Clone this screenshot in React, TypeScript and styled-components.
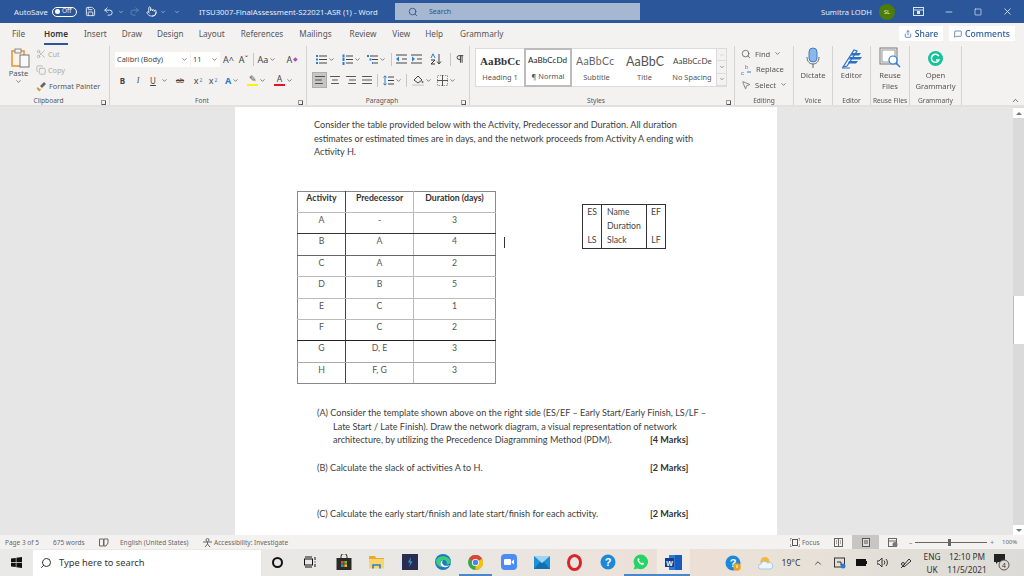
import React from "react";
import styled, { createGlobalStyle } from "styled-components";
import {
  Save, Undo2, Redo2, ChevronDown, ChevronUp, Search, Scissors, Copy, Minus, X, Square, Share, MessageSquare,
  MousePointer2, Pilcrow, AlignLeft, AlignCenter, AlignRight, AlignJustify, Pointer,
} from "lucide-react";

const UI = `"Noto Sans", "Open Sans", sans-serif`;
const DOC = `"Lato", "Noto Sans", sans-serif`;

const Global = createGlobalStyle`
  html, body { margin: 0; padding: 0; width: 1024px; height: 576px; overflow: hidden; background: #f3f2f1; }
  * { box-sizing: border-box; }
  #root { width: 1024px; height: 576px; }
`;

const Shell = styled.div`
  width: 1024px; height: 576px; display: flex; flex-direction: column; overflow: hidden;
  font-family: ${UI}; color: #444; filter: blur(0.3px);
`;

/* ---------- title bar ---------- */
const TitleBar = styled.div`
  height: 23px; flex: none; background: #2b579a; color: #e8edf5; display: flex; align-items: center;
  font-size: 7.7px; padding-left: 14px;
`;
const AutoSaveLabel = styled.span`width: 38px;`;
const Toggle = styled.span`
  width: 25px; height: 10px; border: 1px solid #fff; border-radius: 5px; display: flex; align-items: center;
  padding-left: 2px; gap: 2px; font-size: 6.5px; line-height: 1; margin-right: 4px;
  &::before { content: ""; width: 5px; height: 5px; background: #fff; border-radius: 50%; flex: none; }
`;
const QuickSlot = styled.span<{ $w: number; $dim?: boolean }>`
  width: ${(p) => p.$w}px; display: flex; justify-content: center; align-items: center; opacity: ${(p) => (p.$dim ? 0.3 : 1)};
`;
const DocTitle = styled.span`width: 196px; margin-left: 14px; white-space: nowrap; font-size: 7.7px;`;
const SearchBox = styled.div`
  width: 245px; height: 17px; background: #a5b7d1; color: #33507f; display: flex; align-items: center; gap: 11px;
  padding-left: 13px; font-size: 7px;
`;
const UserName = styled.span`margin-left: 181px; width: 58px; white-space: nowrap; font-size: 7.6px;`;
const Avatar = styled.span`
  width: 16px; height: 16px; border-radius: 50%; background: #4c7d0a; color: #e9f0da; font-size: 5.5px;
  display: flex; align-items: center; justify-content: center; flex: none;
`;
const WinCtl = styled.span<{ $w: number }>`width: ${(p) => p.$w}px; display: flex; justify-content: center;`;

/* ---------- tabs ---------- */
const TabBar = styled.div`
  height: 23px; flex: none; background: #f3f2f1; display: flex; align-items: flex-start; padding: 3px 9px 0 12px; position: relative;
`;
const Tab = styled.span<{ $active?: boolean; $gap: number }>`
  font-size: 8.2px; line-height: 15px; color: ${(p) => (p.$active ? "#333" : "#555")}; margin-right: ${(p) => p.$gap}px; white-space: nowrap;
  font-weight: ${(p) => (p.$active ? 600 : 400)}; height: 19px;
  border-bottom: ${(p) => (p.$active ? "2px solid #2b579a" : "none")};
`;
const TabActions = styled.div`margin-left: auto; display: flex; gap: 6px;`;
const ActionButton = styled.span<{ $w: number }>`
  width: ${(p) => p.$w}px; height: 15px; background: #fff; color: #2b579a; font-size: 8.6px; font-weight: 500;
  display: flex; align-items: center; justify-content: center; gap: 3px;
`;

/* ---------- ribbon ---------- */
const Ribbon = styled.div`
  height: 61px; flex: none; background: #f3f2f1; display: flex; position: relative; border-bottom: 2px solid #e2e1e0;
`;
const Group = styled.div<{ $w: number }>`
  width: ${(p) => p.$w}px; flex: none; height: 59px; position: relative; border-right: 1px solid #d4d3d2; display: flex; flex-direction: column;
`;
const GroupBody = styled.div<{ $dir?: string }>`
  flex: 1; display: flex; flex-direction: ${(p) => p.$dir || "row"}; min-height: 0;
`;
const GroupLabel = styled.div<{ $inset?: boolean }>`
  height: 8px; line-height: 8px; text-align: center; font-size: 6.6px; color: #555; flex: none; white-space: nowrap;
  padding-right: ${(p) => (p.$inset ? 12 : 0)}px;
`;
const Launcher = styled.span`
  position: absolute; right: 3px; bottom: 0; width: 5px; height: 5px; border-left: 1px solid #999; border-top: 1px solid #999;
  &::after { content: ""; position: absolute; right: 0; bottom: 0; width: 3px; height: 3px; border-right: 1px solid #555; border-bottom: 1px solid #555; }
`;
const PasteCol = styled.div`
  width: 36px; display: flex; flex-direction: column; align-items: center; padding: 2px 0 0 1px; font-size: 7.6px; color: #555; line-height: 10px;
`;
const PasteGlyph = styled.span`display: flex; margin-left: 4px;`;
const ClipCol = styled.div`display: flex; flex-direction: column;`;
const ClipRow = styled.div<{ $dim?: boolean }>`
  height: 16px; display: flex; align-items: center; gap: 2px; font-size: 7.3px; white-space: nowrap;
  color: ${(p) => (p.$dim ? "#aaa" : "#555")};
`;
const ToolRows = styled.div<{ $pad: number }>`
  display: flex; flex-direction: column; gap: 5px; padding: 5px 0 0 ${(p) => p.$pad}px;
`;
const ToolRow = styled.div`display: flex; align-items: center; height: 16px;`;
const FontField = styled.span<{ $w: number }>`
  width: ${(p) => p.$w}px; height: 15px; background: #fff; font-size: 7.4px; color: #444; display: flex; align-items: center;
  justify-content: space-between; padding: 0 2px 0 2px; margin-right: 1px; white-space: nowrap;
`;
const Tool = styled.span<{ $w: number; $on?: boolean }>`
  width: ${(p) => p.$w}px; height: 16px; display: flex; align-items: center; justify-content: center; flex: none; gap: 1px;
  font-size: 9px; color: #444; background: ${(p) => (p.$on ? "#c8c6c4" : "transparent")};
  border: ${(p) => (p.$on ? "1px solid #b0aeac" : "none")};
`;
const BoldTool = styled(Tool)`font-weight: 700; font-size: 8px;`;
const ItalicTool = styled(Tool)`font-style: italic; font-size: 8px; font-family: "Liberation Serif", serif;`;
const UnderTool = styled(Tool)`text-decoration: underline; font-size: 8px;`;
const Strike = styled.s`font-size: 7px;`;
const Divider = styled.span`width: 1px; height: 13px; background: #c8c6c4; margin: 0 2px; flex: none;`;
const Colored = styled.span<{ $c: string }>`
  width: 11px; height: 13px; display: flex; flex-direction: column; align-items: center; font-size: 8.5px; line-height: 10px; color: #444;
  &::after { content: ""; width: 11px; height: 2.5px; background: ${(p) => p.$c}; flex: none; }
`;
const Sub = styled.sub`font-size: 5px; color: #2b7cd3;`;
const Sup = styled.sup`font-size: 5px; color: #2b7cd3;`;
const BlueA = styled.span`color: #2b7cd3; font-weight: 700;`;
const Eraser = styled.span`color: #b146c2; font-size: 6px;`;

const Gallery = styled.div`
  margin: 2px 0 0 5px; width: 252px; height: 39px; background: #fff; display: flex; border: 1px solid #dcdbda; position: relative;
`;
const StyleItem = styled.div<{ $w: number; $sel?: boolean }>`
  width: ${(p) => p.$w}px; flex: none; overflow: hidden; display: flex; flex-direction: column; align-items: center;
  padding-top: ${(p) => (p.$sel ? 1 : 3)}px; border: ${(p) => (p.$sel ? "2px solid #bdbcbb" : "none")}; margin-top: ${(p) => (p.$sel ? -1 : 0)}px;
  height: ${(p) => (p.$sel ? 39 : 37)}px;
`;
const Sample = styled.div<{ $size: number; $font?: string; $bold?: boolean; $color: string; $pl: number; $ls?: number }>`
  height: 19px; line-height: 19px; white-space: nowrap; font-size: ${(p) => p.$size}px; color: ${(p) => p.$color};
  font-family: ${(p) => p.$font || DOC}; font-weight: ${(p) => (p.$bold ? 700 : 400)}; letter-spacing: ${(p) => p.$ls ?? 0.1}px;
  align-self: flex-start; padding-left: ${(p) => p.$pl}px;
`;
const Caption = styled.div`font-size: 7.4px; line-height: 12px; color: #555; white-space: nowrap;`;
const GalleryScroll = styled.div`
  margin-left: auto; width: 10px; display: flex; flex-direction: column; background: #f3f2f1; border-left: 1px solid #dcdbda;
`;
const ScrollCell = styled.span<{ $dim?: boolean }>`
  flex: 1; display: flex; align-items: center; justify-content: center; border-bottom: 1px solid #dcdbda; color: ${(p) => (p.$dim ? "#bbb" : "#444")};
`;

const EditRow = styled.div`height: 15.5px; display: flex; align-items: center; gap: 4px; font-size: 7.6px; color: #555; white-space: nowrap;`;
const EditCol = styled.div`padding: 0 0 0 6px; display: flex; flex-direction: column;`;
const BigCol = styled.div`
  flex: 1; display: flex; flex-direction: column; align-items: center; padding-top: 1px; font-size: 7.6px; color: #555; line-height: 10.5px; text-align: center;
`;
const BigIcon = styled.div`height: 22px; display: flex; align-items: center; justify-content: center; margin-bottom: 1px;`;
const Collapse = styled.span`position: absolute; right: 4px; bottom: 0; color: #444; display: flex;`;

/* ---------- document ---------- */
const Workspace = styled.div`flex: 1; min-height: 0; display: flex; background: #e6e6e6;`;
const PageArea = styled.div`flex: 1; display: flex; justify-content: center; overflow: hidden;`;
const Page = styled.div`
  width: 542px; height: 428px; background: #fff; font-family: ${DOC}; font-size: 9.1px; color: #3d3d3d; line-height: 13.6px;
  padding-top: 11px; overflow: hidden;
`;
const Intro = styled.p`margin: 0; padding-left: 79px; white-space: nowrap;`;
const TableRow = styled.div`position: relative; display: flex; align-items: flex-start; margin: 32px 0 0 62px; gap: 86px;`;
const Cursor = styled.span`position: absolute; left: 207px; top: 46px; width: 1px; height: 11px; background: #333;`;
const ActivityTable = styled.table`
  border-collapse: collapse; table-layout: fixed; width: 198px; border: 1px solid #8a8a8a; font-size: 8.7px; line-height: 11px;
`;
const HeadCell = styled.th`
  font-weight: 700; color: #333; vertical-align: top; padding: 0; height: 21.3px; border-bottom: 1px solid #bbb; white-space: nowrap;
  &:first-child { border-right: 1px solid #444; }
  &:nth-child(2) { border-right: 1px solid #bbb; }
`;
const BodyCell = styled.td<{ $line: string }>`
  text-align: center; vertical-align: top; padding: 1px 0 0; height: 21.4px; color: #555; border-bottom: 1px solid ${(p) => p.$line};
  &:first-child { border-right: 1px solid #444; }
  &:nth-child(2) { border-right: 1px solid #bbb; }
`;
const TemplateTable = styled.table`
  border-collapse: collapse; table-layout: fixed; width: 83px; margin-top: 13px; border: 1px solid #333; font-size: 8.7px; line-height: 13px; color: #444;
`;
const TemplateCell = styled.td<{ $center?: boolean }>`
  height: 14.6px; padding: 0 0 0 ${(p) => (p.$center ? 0 : 5)}px; text-align: ${(p) => (p.$center ? "center" : "left")}; white-space: nowrap; vertical-align: top;
  &:nth-child(2) { border-left: 1px solid #333; border-right: 1px solid #333; }
`;
const Questions = styled.div`padding-left: 82px;`;
const QLine = styled.div<{ $indent?: boolean; $top?: number }>`
  display: flex; white-space: nowrap; padding-left: ${(p) => (p.$indent ? 16 : 0)}px; margin-top: ${(p) => p.$top || 0}px;
`;
const QText = styled.span<{ $indent?: boolean }>`width: ${(p) => (p.$indent ? 317 : 333)}px; flex: none;`;
const Marks = styled.b`font-weight: 700; color: #333;`;

const ScrollBar = styled.div`width: 11px; margin-left: 1px; background: #dadada; display: flex; flex-direction: column; position: relative;`;
const ScrollUp = styled.span`height: 10px; background: #fff; display: flex; align-items: center; justify-content: center; margin: 1px 0 0;`;
const Triangle = styled.span<{ $down?: boolean }>`
  width: 0; height: 0; border-left: 3px solid transparent; border-right: 3px solid transparent;
  ${(p) => (p.$down ? "border-top: 3px solid #777;" : "border-bottom: 3px solid #777;")}
`;
const ScrollThumb = styled.span`margin-top: 178px; height: 48px; background: #fff; border-left: 1px solid #bbb;`;
const ScrollDown = styled.span`margin-top: auto; height: 10px; background: #fff; display: flex; align-items: center; justify-content: center;`;

/* ---------- status bar ---------- */
const StatusBar = styled.div`
  height: 14px; flex: none; background: #f3f2f1; display: flex; align-items: center; font-size: 6.5px; color: #666; padding-left: 5px; white-space: nowrap;
`;
const StatusItem = styled.span<{ $w: number }>`width: ${(p) => p.$w}px; flex: none; display: flex; align-items: center; gap: 2px; padding-top: 1px;`;
const StatusRight = styled.div`margin-left: auto; display: flex; align-items: center; height: 14px;`;
const ViewBtn = styled.span<{ $on?: boolean }>`
  width: 27px; height: 14px; background: ${(p) => (p.$on ? "#c8c6c4" : "transparent")}; display: flex; align-items: center; justify-content: center;
`;
const Zoom = styled.div`width: 85px; display: flex; align-items: center; gap: 3px; color: #777; margin-left: 3px;`;
const ZoomTrack = styled.span`flex: 1; height: 1px; background: #666; position: relative;
  &::after { content: ""; position: absolute; left: 33px; top: -3px; width: 3px; height: 7px; background: #666; }
`;
const ZoomPct = styled.span`width: 30px; padding-left: 8px; font-size: 6px;`;

/* ---------- taskbar ---------- */
const Taskbar = styled.div`
  height: 27px; flex: none; display: flex; align-items: center; color: #2a2a2a;
  background: linear-gradient(90deg, #e9e9e7 0%, #e9e7e3 45%, #ecdfd6 68%, #e9e2d8 75%, #dcdbd7 100%);
`;
const StartCell = styled.span`width: 33px; display: flex; justify-content: center;`;
const TaskSearch = styled.div`
  width: 228px; height: 26px; background: #fff; display: flex; align-items: center; gap: 7px; padding-left: 7px; font-size: 9.3px; color: #333; white-space: nowrap;
`;
const MirrorSearch = styled(Search)`transform: scaleX(-1);`;
const TaskCell = styled.span<{ $under?: boolean; $active?: boolean }>`
  width: 33px; height: 27px; flex: none; display: flex; align-items: center; justify-content: center;
  background: ${(p) => (p.$active ? "rgba(255,255,255,.35)" : "transparent")};
  border-bottom: 2px solid ${(p) => (p.$under ? "#4a86c8" : "transparent")};
  padding-top: 1px;
`;
const Cortana = styled.span`width: 11px; height: 11px; border: 2px solid #111; border-radius: 50%;`;
const Tray = styled.div`margin-left: auto; display: flex; align-items: center; height: 27px; padding-right: 13px;`;
const TrayCell = styled.span<{ $w: number }>`width: ${(p) => p.$w}px; flex: none; display: flex; justify-content: center; align-items: center; font-size: 8.6px; color: #333; white-space: nowrap;`;
const TrayStack = styled.span<{ $w: number }>`
  width: ${(p) => p.$w}px; flex: none; display: flex; flex-direction: column; align-items: center; font-size: 8.3px; line-height: 13px; color: #333; white-space: nowrap;
`;

/* ---------- drawn icons ---------- */
const Lines = ({ ys, x1 = 1, x2 = 11, c = "#444" }: { ys: number[]; x1?: number; x2?: number; c?: string }) => (
  <>{ys.map((y) => <line key={y} x1={x1} x2={x2} y1={y} y2={y} stroke={c} strokeWidth="1" />)}</>
);
const Down = ({ s = 7 }: { s?: number }) => <ChevronDown size={s} color="#555" strokeWidth={2.4} />;
const Bullets = () => (
  <svg width="11" height="11"><Lines ys={[2, 5.5, 9]} x1={3} /><rect x="0" y="1" width="2" height="2" fill="#2b7cd3" /><rect x="0" y="4.5" width="2" height="2" fill="#2b7cd3" /><rect x="0" y="8" width="2" height="2" fill="#2b7cd3" /></svg>
);
const Numbers = () => (
  <svg width="11" height="11"><Lines ys={[2, 5.5, 9]} x1={4} /><rect x="0.5" y="0.5" width="2" height="3" fill="#2b7cd3" /><rect x="0.5" y="4" width="2" height="3" fill="#2b7cd3" /><rect x="0.5" y="8" width="2" height="3" fill="#2b7cd3" /></svg>
);
const Multi = () => (
  <svg width="11" height="11"><line x1="3" x2="11" y1="2" y2="2" stroke="#444" /><line x1="5" x2="11" y1="5.5" y2="5.5" stroke="#444" /><line x1="7" x2="11" y1="9" y2="9" stroke="#444" /><rect x="0" y="1" width="2" height="2" fill="#2b7cd3" /><rect x="2.5" y="4.5" width="2" height="2" fill="#2b7cd3" /><rect x="5" y="8" width="1.5" height="2" fill="#2b7cd3" /></svg>
);
const Indent = ({ flip }: { flip?: boolean }) => (
  <svg width="11" height="10"><Lines ys={[1, 9]} x1={0} /><line x1="6" x2="11" y1="5" y2="5" stroke="#444" /><path d={flip ? "M0 5l3-2.5v5z" : "M4 5l-3-2.5v5z"} fill="#2b7cd3" /></svg>
);
const Sort = () => (
  <svg width="12" height="12"><path d="M1 5 L3 0.8 L5 5" fill="none" stroke="#2b7cd3" /><path d="M1 7h4l-4 4h4" fill="none" stroke="#333" /><path d="M9 1v10M7 8.5L9 11l2-2.5" fill="none" stroke="#444" /></svg>
);
const LineSpacing = () => (
  <svg width="11" height="11"><path d="M2 1v9M0.5 2.5L2 .8l1.5 1.7M.5 8.5L2 10.2l1.5-1.7" fill="none" stroke="#2b7cd3" /><Lines ys={[2, 5.5, 9]} x1={5} /></svg>
);
const Fill = () => (
  <svg width="12" height="12"><path d="M2 6L6 2l4 4-4 3z" fill="none" stroke="#444" /><rect x="0" y="10.5" width="12" height="1.2" fill="#ccc" /><circle cx="10.5" cy="8" r="1" fill="#666" /></svg>
);
const Borders = () => (
  <svg width="11" height="11"><rect x=".5" y=".5" width="10" height="10" fill="none" stroke="#999" strokeDasharray="1.5 1" /><path d="M0 5.5h11M5.5 0v11" stroke="#555" /></svg>
);
const PasteIcon = () => (
  <svg width="19" height="20" viewBox="0 0 19 20">
    <rect x="1" y="3" width="12" height="15" fill="#fdf3e6" stroke="#e8912d" strokeWidth="1.5" />
    <rect x="4" y="1" width="6" height="4" fill="#f3f2f1" stroke="#888" />
    <rect x="9" y="7" width="9" height="12" fill="#f9f9f9" stroke="#777" />
  </svg>
);
const Painter = () => (
  <svg width="11" height="11" viewBox="0 0 11 11"><path d="M1 6L5 8.5 3.5 10.5 0.8 8z" fill="#e8912d" /><path d="M4 5L8 1l2 2-4 4z" fill="#666" /></svg>
);
const FindRep = () => (
  <svg width="11" height="11"><text x="4" y="5" fontSize="6" fill="#b146c2" fontFamily="Liberation Sans">b</text><text x="0" y="10.5" fontSize="6" fill="#2b7cd3" fontFamily="Liberation Sans">c</text><path d="M6 8h4" stroke="#2b7cd3" /></svg>
);
const MicIcon = () => (
  <svg width="14" height="22" viewBox="0 0 14 22"><rect x="3" y="1" width="8" height="14" rx="4" fill="#8ab8e8" stroke="#3d7cc9" /><path d="M1 10c0 5 3 7 6 7s6-2 6-7M7 17v4" fill="none" stroke="#666" /></svg>
);
const EditorIcon = () => (
  <svg width="22" height="22" viewBox="0 0 22 22"><path d="M2 20L13 3l3 1L6 19z" fill="none" stroke="#2b6fc7" strokeWidth="1.2" /><path d="M9 10h12l-2 2.5H8zM8 14h9l-2 2.5H7zM11 6h9l-2 2.5h-8z" fill="#2b6fc7" /><path d="M1 21h8" stroke="#2b6fc7" /></svg>
);
const ReuseIcon = () => (
  <svg width="22" height="22" viewBox="0 0 22 22"><rect x="1" y="1" width="17" height="16" fill="#f3f2f1" stroke="#777" /><rect x="3" y="3" width="13" height="12" fill="#fff" stroke="#999" /><circle cx="14" cy="13" r="4" fill="#fff" stroke="#2b7cd3" strokeWidth="1.2" /><path d="M17 16l4 4" stroke="#2b7cd3" strokeWidth="1.4" /></svg>
);
const GrammarlyIcon = () => (
  <svg width="15" height="15" viewBox="0 0 15 15"><circle cx="7.5" cy="7.5" r="7.5" fill="#15c39a" /><path d="M10.8 5.2A4 4 0 1 0 11 9H8" fill="none" stroke="#fff" strokeWidth="1.5" /></svg>
);
const PresentIcon = () => (
  <svg width="11" height="9"><rect x=".5" y=".5" width="10" height="8" fill="none" stroke="#dfe6f1" /><path d="M.5 3h10" stroke="#dfe6f1" /><rect x="4" y="4" width="3" height="3" fill="#dfe6f1" /></svg>
);
const WinLogo = () => (
  <svg width="11" height="11"><path d="M0 1.6L4.8.9v4.2H0zM5.4.8L11 0v5.1H5.4zM0 5.8h4.8V10L0 9.4zM5.4 5.8H11V11l-5.6-.8z" fill="#111" /></svg>
);
const TaskView = () => (
  <svg width="13" height="12"><rect x=".5" y="3" width="8" height="6" fill="none" stroke="#111" /><path d="M1 1h7M1 11h7M11 1v3M11 5.5v1M11 8v3" stroke="#111" /></svg>
);
const Store = () => (
  <svg width="16" height="16"><path d="M5 4V2.5a3 3 0 0 1 6 0V4" fill="none" stroke="#222" /><rect x="0.5" y="4" width="15" height="12" fill="#2a2a2a" /><rect x="5" y="7" width="2.7" height="2.7" fill="#e8492b" /><rect x="8.3" y="7" width="2.7" height="2.7" fill="#7cb82f" /><rect x="5" y="10.3" width="2.7" height="2.7" fill="#2b8fe0" /><rect x="8.3" y="10.3" width="2.7" height="2.7" fill="#f5b800" /></svg>
);
const Folder = () => (
  <svg width="15" height="14"><path d="M0 1h6l1 2h8v2H0z" fill="#e9a92c" /><rect y="4" width="15" height="9.5" fill="#fbd56b" /><path d="M4 13.5V10h7v3.5" fill="none" stroke="#2b7cd3" strokeWidth="1.6" /></svg>
);
const DarkApp = () => (
  <svg width="16" height="16"><rect width="16" height="16" fill="#2a2d52" /><path d="M9 3L6 8.5h2.4L7 13l3.5-5.5H8.2z" fill="#29a9e0" /></svg>
);
const Edge = () => (
  <svg width="16" height="16" viewBox="0 0 16 16"><circle cx="8" cy="8" r="8" fill="#1b79c4" /><path d="M1 6.5C3 1 13 0.5 15.7 7c.6 3-2 3.6-4.4 3.2C13 7 9 4.5 6.3 7 5 8.2 5 11 7 13c-3 .2-6-2.5-6-6.5z" fill="#3ecb7a" /><path d="M5.5 9.5c0 3 3 4.5 6 3.6 1.2-.4 2.4-1.2 3-2.2-2 1.2-4 1-5.2.5C7.5 10.7 6.2 8.7 8 6.6 6 7 5.5 8.4 5.5 9.5z" fill="#fff" /></svg>
);
const Chrome = () => (
  <svg width="15" height="15" viewBox="0 0 16 16"><circle cx="8" cy="8" r="8" fill="#3fa34d" /><path d="M8 8L1.1 4A8 8 0 0 1 15 4z" fill="#db4437" /><path d="M8 8l7-4a8 8 0 0 1-7 12z" fill="#f4c20d" /><circle cx="8" cy="8" r="3.8" fill="#fff" /><circle cx="8" cy="8" r="2.9" fill="#4285f4" /></svg>
);
const ZoomApp = () => (
  <svg width="16" height="16"><rect width="16" height="16" rx="4" fill="#4a8cf7" /><rect x="3" y="5" width="7" height="6" rx="1" fill="#fff" /><path d="M10.5 7.5l2.5-2v5l-2.5-2z" fill="#fff" /></svg>
);
const Mail = () => (
  <svg width="16" height="13"><rect width="16" height="13" fill="#1f8fd6" /><path d="M0 0h16L8 7z" fill="#9fd5f3" /><path d="M0 13l6-7 2 1.6 2-1.6 6 7z" fill="#0f6fb0" /></svg>
);
const Opera = () => (
  <svg width="15" height="17"><ellipse cx="7.5" cy="8.5" rx="6" ry="7" fill="none" stroke="#d8232a" strokeWidth="3" /></svg>
);
const HelpBall = ({ warn }: { warn?: boolean }) => (
  <svg width="16" height="16" viewBox="0 0 16 16"><circle cx="8" cy="8" r="7.5" fill="#1e88d8" /><text x="8" y="12" textAnchor="middle" fontSize="11" fontWeight="700" fill="#fff" fontFamily="Liberation Sans">?</text>{warn && <><circle cx="12" cy="12" r="3.8" fill="#f0a21e" /><rect x="11.5" y="10" width="1" height="3" fill="#fff" /></>}</svg>
);
const WhatsApp = () => (
  <svg width="16" height="16" viewBox="0 0 16 16"><path d="M8 .5a7.3 7.3 0 0 0-6.2 11.2L.8 15.4l3.8-1A7.3 7.3 0 1 0 8 .5z" fill="#25d366" /><path d="M5 4.5c-1 1.2-.5 3 1 4.6s3.4 2.3 4.7 1.3l.4-1-1.8-1-.8.7c-1-.4-2-1.4-2.5-2.6l.7-.7-.9-1.9z" fill="#fff" /></svg>
);
const WordApp = () => (
  <svg width="17" height="15"><rect x="4" width="13" height="15" fill="#2b7cd3" /><rect x="10" width="7" height="15" fill="#185abd" /><rect y="3" width="9" height="9" fill="#103f91" /><text x="4.5" y="10.5" textAnchor="middle" fontSize="7" fontWeight="700" fill="#fff" fontFamily="Liberation Sans">W</text></svg>
);
const Cloud = () => (
  <svg width="16" height="14"><circle cx="7" cy="5.5" r="4.5" fill="#f6b73c" /><path d="M3 13a2.5 2.5 0 0 1 0-5 3.5 3.5 0 0 1 6.5-1 3 3 0 0 1 3.5 6z" fill="#eef5fb" stroke="#8fc0e6" strokeWidth="0.8" /></svg>
);
const Monitor = () => (
  <svg width="12" height="12"><rect x=".5" y="1" width="10" height="9" fill="none" stroke="#333" /><circle cx="9" cy="9" r="2.5" fill="#2b7cd3" /><path d="M3 5h4v3" fill="none" stroke="#333" /></svg>
);
const Battery = () => <svg width="11" height="7"><rect width="10" height="7" fill="#111" /><rect x="10" y="2" width="1" height="3" fill="#111" /></svg>;
const Speaker = () => <svg width="11" height="9"><path d="M0 3h2l3-3v9L2 6H0z" fill="none" stroke="#333" /><path d="M7 2.5a3 3 0 0 1 0 4M9 1a5 5 0 0 1 0 7" fill="none" stroke="#333" /></svg>;
const Pen = () => <svg width="12" height="12"><path d="M1 11L4 8M3 9l6-7 2 2-7 6z" fill="none" stroke="#333" /><circle cx="3" cy="7" r="1.5" fill="none" stroke="#333" /></svg>;
const Notify = () => (
  <svg width="17" height="17"><path d="M0 0h11v8H4l-2 2V8H0z" fill="#222" /><circle cx="10" cy="11" r="5" fill="#dcdbd7" stroke="#555" /><text x="10" y="13.5" fontSize="7" textAnchor="middle" fill="#333" fontFamily="Liberation Sans">4</text></svg>
);
const BookIcon = () => <svg width="10" height="9"><path d="M.5 1h4v7h-4zM5 1h4v4L7 8H5z" fill="none" stroke="#666" /></svg>;
const PersonIcon = () => <svg width="9" height="9"><circle cx="4.5" cy="2" r="1.5" fill="none" stroke="#666" /><path d="M0 4h9M4.5 4v2L2 9M4.5 6L7 9" stroke="#666" fill="none" /></svg>;
const FocusIcon = () => <svg width="10" height="9"><rect x="2.5" y="1.5" width="5" height="6" fill="none" stroke="#555" /><path d="M0 3V0h2M8 0h2v3M0 6v3h2M8 9h2V6" fill="none" stroke="#777" /></svg>;
const ReadIcon = () => <svg width="9" height="9"><rect x=".5" y=".5" width="8" height="8" fill="none" stroke="#666" /><path d="M4.5 0v9M2 3h1M2 5h1M6 3h1M6 5h1" stroke="#666" /></svg>;
const PrintIcon = () => <svg width="8" height="9"><rect x=".5" y=".5" width="7" height="8" fill="#ddd" stroke="#555" /><path d="M2 3h4M2 5h4" stroke="#555" /></svg>;
const WebIcon = () => <svg width="10" height="9"><rect x=".5" y=".5" width="8" height="8" fill="none" stroke="#666" /><circle cx="7" cy="6.5" r="2.5" fill="#777" /><path d="M1 3h7" stroke="#666" /></svg>;

const tabs: [string, number][] = [
  ["File", 19], ["Home", 16], ["Insert", 15], ["Draw", 15], ["Design", 15], ["Layout", 16], ["References", 16],
  ["Mailings", 18], ["Review", 16], ["View", 15], ["Help", 17], ["Grammarly", 0],
];
const rows = [
  ["A", "-", "3", "#333"], ["B", "A", "4", "#666"], ["C", "A", "2", "#bbb"], ["D", "B", "5", "#bbb"],
  ["E", "C", "1", "#bbb"], ["F", "C", "2", "#222"], ["G", "D, E", "3", "#aaa"], ["H", "F, G", "3", "#8a8a8a"],
];
const taskIcons = [
  { el: <Cortana /> },
  { el: <TaskView /> }, { el: <Store /> }, { el: <Folder /> }, { el: <DarkApp /> }, { el: <Edge /> },
  { el: <Chrome />, under: true }, { el: <ZoomApp /> }, { el: <Mail /> }, { el: <Opera /> }, { el: <HelpBall /> },
  { el: <WhatsApp />, under: true }, { el: <WordApp />, under: true, active: true },
];

export default function App() {
  return (
    <Shell>
      <Global />
      <TitleBar>
        <AutoSaveLabel>AutoSave</AutoSaveLabel>
        <Toggle>Off</Toggle>
        <QuickSlot $w={19}><Save size={11} strokeWidth={2} /></QuickSlot>
        <QuickSlot $w={17}><Undo2 size={11} strokeWidth={2} /></QuickSlot>
        <QuickSlot $w={8}><ChevronDown size={6} /></QuickSlot>
        <QuickSlot $w={19} $dim><Redo2 size={11} strokeWidth={2} /></QuickSlot>
        <QuickSlot $w={14}><Pointer size={11} strokeWidth={2} /></QuickSlot>
        <QuickSlot $w={10}><ChevronDown size={6} /></QuickSlot>
        <QuickSlot $w={17}><ChevronDown size={6} /></QuickSlot>
        <DocTitle>ITSU3007-FinalAssessment-S22021-ASR (1)  -  Word</DocTitle>
        <SearchBox><Search size={10} strokeWidth={2} />Search</SearchBox>
        <UserName>Sumitra LODH</UserName>
        <Avatar>SL</Avatar>
        <WinCtl $w={46}><PresentIcon /></WinCtl>
        <WinCtl $w={15}><Minus size={10} strokeWidth={1.8} /></WinCtl>
        <WinCtl $w={44}><Square size={8} strokeWidth={2} /></WinCtl>
        <WinCtl $w={15}><X size={11} strokeWidth={1.8} /></WinCtl>
      </TitleBar>

      <TabBar>
        {tabs.map(([t, g]) => <Tab key={t} $gap={g} $active={t === "Home"}>{t}</Tab>)}
        <TabActions>
          <ActionButton $w={44}><Share size={8} />Share</ActionButton>
          <ActionButton $w={66}><MessageSquare size={8} />Comments</ActionButton>
        </TabActions>
      </TabBar>

      <Ribbon>
        <Group $w={110}>
          <GroupBody>
            <PasteCol><PasteGlyph><PasteIcon /></PasteGlyph>Paste<Down /></PasteCol>
            <ClipCol>
              <ClipRow $dim><Scissors size={10} strokeWidth={1.8} />Cut</ClipRow>
              <ClipRow $dim><Copy size={10} strokeWidth={1.8} />Copy</ClipRow>
              <ClipRow><Painter />Format Painter</ClipRow>
            </ClipCol>
          </GroupBody>
          <GroupLabel $inset>Clipboard</GroupLabel>
          <Launcher />
        </Group>

        <Group $w={197}>
          <GroupBody>
            <ToolRows $pad={5}>
              <ToolRow>
                <FontField $w={75}>Calibri (Body)<Down /></FontField>
                <FontField $w={29}>11<Down /></FontField>
                <Tool $w={15}>A^</Tool>
                <Tool $w={15}>Aˇ</Tool>
                <Divider />
                <Tool $w={22}>Aa<Down /></Tool>
                <Tool $w={29}>A<Eraser>◆</Eraser></Tool>
              </ToolRow>
              <ToolRow>
                <BoldTool $w={15}>B</BoldTool>
                <ItalicTool $w={16}>I</ItalicTool>
                <UnderTool $w={14}>U</UnderTool>
                <Tool $w={9}><Down /></Tool>
                <Tool $w={22}><Strike>ab</Strike></Tool>
                <Tool $w={14}>x<Sub>2</Sub></Tool>
                <Tool $w={16}>x<Sup>2</Sup></Tool>
                <Tool $w={22}><BlueA>A</BlueA><Down /></Tool>
                <Tool $w={27}><Colored $c="#fff200">✎</Colored><Down /></Tool>
                <Tool $w={27}><Colored $c="#e81123">A</Colored><Down /></Tool>
              </ToolRow>
            </ToolRows>
          </GroupBody>
          <GroupLabel $inset>Font</GroupLabel>
          <Launcher />
        </Group>

        <Group $w={163}>
          <GroupBody>
            <ToolRows $pad={5}>
              <ToolRow>
                <Tool $w={26}><Bullets /><Down /></Tool>
                <Tool $w={26}><Numbers /><Down /></Tool>
                <Tool $w={25}><Multi /><Down /></Tool>
                <Divider />
                <Tool $w={15}><Indent flip /></Tool>
                <Tool $w={15}><Indent /></Tool>
                <Tool $w={24}><Sort /></Tool>
                <Divider />
                <Tool $w={14}><Pilcrow size={10} strokeWidth={2.4} /></Tool>
              </ToolRow>
              <ToolRow>
                <Tool $w={15} $on><AlignLeft size={12} strokeWidth={1.8} /></Tool>
                <Tool $w={16}><AlignCenter size={12} strokeWidth={1.8} /></Tool>
                <Tool $w={16}><AlignRight size={12} strokeWidth={1.8} /></Tool>
                <Tool $w={16}><AlignJustify size={12} strokeWidth={1.8} /></Tool>
                <Divider />
                <Tool $w={24}><LineSpacing /><Down /></Tool>
                <Divider />
                <Tool $w={25}><Fill /><Down /></Tool>
                <Tool $w={25}><Borders /><Down /></Tool>
              </ToolRow>
            </ToolRows>
          </GroupBody>
          <GroupLabel $inset>Paragraph</GroupLabel>
          <Launcher />
        </Group>

        <Group $w={265}>
          <GroupBody>
            <Gallery>
              <StyleItem $w={48}><Sample $pl={4} $size={11} $bold $font={`"Liberation Serif", serif`} $color="#333">AaBbCc</Sample><Caption>Heading 1</Caption></StyleItem>
              <StyleItem $w={48} $sel><Sample $pl={2} $size={8} $color="#222">AaBbCcDd</Sample><Caption>¶ Normal</Caption></StyleItem>
              <StyleItem $w={49}><Sample $pl={4} $size={10.5} $ls={0.3} $color="#666">AaBbCc</Sample><Caption>Subtitle</Caption></StyleItem>
              <StyleItem $w={47}><Sample $pl={5} $size={12.5} $color="#555">AaBbC</Sample><Caption>Title</Caption></StyleItem>
              <StyleItem $w={48}><Sample $pl={5} $size={8} $color="#444">AaBbCcDe</Sample><Caption>No Spacing</Caption></StyleItem>
              <GalleryScroll>
                <ScrollCell $dim><ChevronUp size={6} /></ScrollCell>
                <ScrollCell><ChevronDown size={6} /></ScrollCell>
                <ScrollCell><ChevronDown size={6} /></ScrollCell>
              </GalleryScroll>
            </Gallery>
          </GroupBody>
          <GroupLabel $inset>Styles</GroupLabel>
          <Launcher />
        </Group>

        <Group $w={59}>
          <GroupBody>
            <EditCol>
              <EditRow><Search size={10} strokeWidth={1.8} />Find <Down /></EditRow>
              <EditRow><FindRep />Replace</EditRow>
              <EditRow><MousePointer2 size={10} strokeWidth={1.6} />Select <Down /></EditRow>
            </EditCol>
          </GroupBody>
          <GroupLabel>Editing</GroupLabel>
        </Group>
        <Group $w={39}>
          <BigCol><BigIcon><MicIcon /></BigIcon>Dictate</BigCol>
          <GroupLabel>Voice</GroupLabel>
        </Group>
        <Group $w={38}>
          <BigCol><BigIcon><EditorIcon /></BigIcon>Editor</BigCol>
          <GroupLabel>Editor</GroupLabel>
        </Group>
        <Group $w={39}>
          <BigCol><BigIcon><ReuseIcon /></BigIcon>Reuse<br />Files</BigCol>
          <GroupLabel>Reuse Files</GroupLabel>
        </Group>
        <Group $w={52}>
          <BigCol><BigIcon><GrammarlyIcon /></BigIcon>Open<br />Grammarly</BigCol>
          <GroupLabel>Grammarly</GroupLabel>
        </Group>
        <Collapse><ChevronUp size={9} strokeWidth={2} /></Collapse>
      </Ribbon>

      <Workspace>
        <PageArea>
          <Page>
            <Intro>
              Consider the table provided below with the Activity, Predecessor and Duration. All duration<br />
              estimates or estimated times are in days, and the network proceeds from Activity A ending with<br />
              Activity H.
            </Intro>
            <TableRow>
              <ActivityTable>
                <colgroup><col width="48" /><col width="68" /><col width="82" /></colgroup>
                <thead>
                  <tr><HeadCell>Activity</HeadCell><HeadCell>Predecessor</HeadCell><HeadCell>Duration (days)</HeadCell></tr>
                </thead>
                <tbody>
                  {rows.map(([a, p, d, line]) => (
                    <tr key={a}>
                      <BodyCell $line={line}>{a}</BodyCell>
                      <BodyCell $line={line}>{p}</BodyCell>
                      <BodyCell $line={line}>{d}</BodyCell>
                    </tr>
                  ))}
                </tbody>
              </ActivityTable>
              <Cursor />
              <TemplateTable>
                <colgroup><col width="19" /><col width="45" /><col width="19" /></colgroup>
                <tbody>
                  <tr><TemplateCell $center>ES</TemplateCell><TemplateCell>Name</TemplateCell><TemplateCell $center>EF</TemplateCell></tr>
                  <tr><TemplateCell $center /><TemplateCell>Duration</TemplateCell><TemplateCell $center /></tr>
                  <tr><TemplateCell $center>LS</TemplateCell><TemplateCell>Slack</TemplateCell><TemplateCell $center>LF</TemplateCell></tr>
                </tbody>
              </TemplateTable>
            </TableRow>
            <Questions>
              <QLine $top={22}><QText>(A) Consider the template shown above on the right side (ES/EF – Early Start/Early Finish, LS/LF –</QText></QLine>
              <QLine $indent><QText $indent>Late Start / Late Finish). Draw the network diagram, a visual representation of network</QText></QLine>
              <QLine $indent><QText $indent>architecture, by utilizing the Precedence Diagramming Method (PDM).</QText><Marks>[4 Marks]</Marks></QLine>
              <QLine $top={14}><QText>(B) Calculate the slack of activities A to H.</QText><Marks>[2 Marks]</Marks></QLine>
              <QLine $top={32}><QText>(C) Calculate the early start/finish and late start/finish for each activity.</QText><Marks>[2 Marks]</Marks></QLine>
            </Questions>
          </Page>
        </PageArea>
        <ScrollBar>
          <ScrollUp><Triangle /></ScrollUp>
          <ScrollThumb />
          <ScrollDown><Triangle $down /></ScrollDown>
        </ScrollBar>
      </Workspace>

      <StatusBar>
        <StatusItem $w={48}>Page 3 of 5</StatusItem>
        <StatusItem $w={46}>675 words</StatusItem>
        <StatusItem $w={21}><BookIcon /></StatusItem>
        <StatusItem $w={83}>English (United States)</StatusItem>
        <StatusItem $w={90}><PersonIcon />Accessibility: Investigate</StatusItem>
        <StatusRight>
          <StatusItem $w={35}><FocusIcon />Focus</StatusItem>
          <ViewBtn><ReadIcon /></ViewBtn>
          <ViewBtn $on><PrintIcon /></ViewBtn>
          <ViewBtn><WebIcon /></ViewBtn>
          <Zoom>–<ZoomTrack />+</Zoom>
          <ZoomPct>100%</ZoomPct>
        </StatusRight>
      </StatusBar>

      <Taskbar>
        <StartCell><WinLogo /></StartCell>
        <TaskSearch><MirrorSearch size={12} strokeWidth={2} />Type here to search</TaskSearch>
        {taskIcons.map((t, i) => <TaskCell key={i} $under={t.under} $active={t.active}>{t.el}</TaskCell>)}
        <Tray>
          <TrayCell $w={34}><HelpBall warn /></TrayCell>
          <TrayCell $w={31}><Cloud /></TrayCell>
          <TrayCell $w={20}>19°C</TrayCell>
          <TrayCell $w={33}><ChevronUp size={10} strokeWidth={2} /></TrayCell>
          <TrayCell $w={12}><Monitor /></TrayCell>
          <TrayCell $w={30}><Battery /></TrayCell>
          <TrayCell $w={12}><Speaker /></TrayCell>
          <TrayCell $w={35}><Pen /></TrayCell>
          <TrayStack $w={18}><span>ENG</span><span>UK</span></TrayStack>
          <TrayStack $w={52}><span>12:10 PM</span><span>11/5/2021</span></TrayStack>
          <TrayCell $w={18}><Notify /></TrayCell>
        </Tray>
      </Taskbar>
    </Shell>
  );
}
